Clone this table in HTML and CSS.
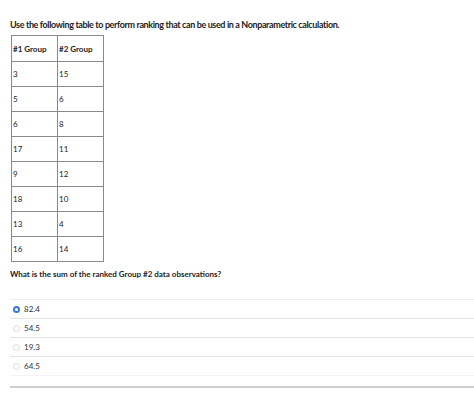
FILE: index.html
```html
<!DOCTYPE html>
<html>
<head>
<meta charset="utf-8">
<link rel="stylesheet" href="styles.css">
</head>
<body>
<div class="page">
  <p class="prompt">Use the following table to perform ranking that can be used in a Nonparametric calculation.</p>
  <table class="data">
    <tr class="head"><th>#1 Group</th><th>#2 Group</th></tr>
    <tr><td>3</td><td>15</td></tr>
    <tr><td>5</td><td>6</td></tr>
    <tr><td>6</td><td>8</td></tr>
    <tr><td>17</td><td>11</td></tr>
    <tr><td>9</td><td>12</td></tr>
    <tr><td>18</td><td>10</td></tr>
    <tr><td>13</td><td>4</td></tr>
    <tr><td>16</td><td>14</td></tr>
  </table>
  <p class="question">What is the sum of the ranked Group #2 data observations?</p>
  <div class="options">
    <div class="option"><span class="radio checked"></span><span class="label">82.4</span></div>
    <div class="option"><span class="radio"></span><span class="label">54.5</span></div>
    <div class="option"><span class="radio"></span><span class="label">19.3</span></div>
    <div class="option"><span class="radio"></span><span class="label">64.5</span></div>
  </div>
</div>
</body>
</html>
```
FILE: styles.css
```css
html, body {
  margin: 0;
  padding: 0;
  background: #fff;
}
.page {
  padding: 19px 0 0 10px;
  font-family: Lato, "Liberation Sans", sans-serif;
  color: #222;
}
.prompt {
  margin: 0;
  font-size: 9px;
  line-height: 12px;
  font-weight: 700;
  letter-spacing: -0.38px;
}
.data {
  margin: 4px 0 0 1px;
  border-collapse: collapse;
  font-size: 8px;
}
.data th, .data td {
  border: 1px solid #8a8a8a;
  width: 44px;
  padding: 0 0 0 1px;
  text-align: left;
  height: 24px;
  vertical-align: middle;
}
.data th {
  font-weight: 700;
  height: 25px;
}
.question {
  margin: 6px 0 0 0;
  font-size: 8px;
  line-height: 12px;
  font-weight: 700;
}
.options {
  margin-top: 19px;
  border-top: 1px solid #ececec;
  border-bottom: 2px solid #cfcfcf;
  padding-bottom: 10px;
}
.option {
  display: flex;
  align-items: center;
  height: 18px;
  border-bottom: 1px solid #e4e4e4;
  padding-left: 3px;
  font-size: 8px;
}
.option:last-child {
  border-bottom: 1px solid #f4f4f4;
}
.radio {
  box-sizing: border-box;
  width: 7px;
  height: 7px;
  border-radius: 50%;
  border: 1px solid #dcdcdc;
  margin-right: 4px;
}
.radio.checked {
  border: 2px solid #3b78d8;
  background: #fff;
}
.label {
  color: #333;
}
```
